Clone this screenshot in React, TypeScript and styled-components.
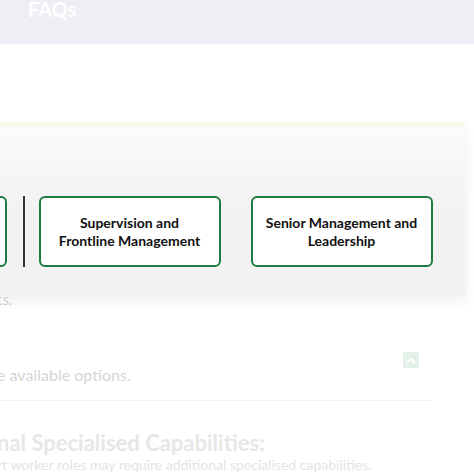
import styled, { createGlobalStyle } from "styled-components";

const GlobalStyle = createGlobalStyle`
  html, body {
    margin: 0;
    padding: 0;
    background: #ffffff;
    overflow: hidden;
  }
  body {
    font-family: Lato, "Liberation Sans", sans-serif;
  }
`;

const Page = styled.div`
  width: 474px;
  height: 474px;
  overflow: hidden;
  position: relative;
`;

const Banner = styled.header`
  height: 45px;
  background: #efeef4;
  padding-left: 28px;
  box-sizing: border-box;
  box-shadow: 0 1px 2px rgba(0, 0, 0, 0.02);
`;

const BannerTitle = styled.h1`
  margin: 0;
  font-size: 20px;
  line-height: 20px;
  font-weight: 700;
  color: #ffffff;
  margin-top: -1px;
`;

const Spacer = styled.div<{ $h: number }>`
  height: ${(p) => p.$h}px;
`;

const Panel = styled.section`
  width: 465px;
  border-top: 5px solid #f8f8ec;
  background: linear-gradient(#fbfbfb 0px, #f3f3f3 75px, #f2f2f2 100%);
  box-shadow: 2px 6px 10px rgba(0, 0, 0, 0.05);
  padding: 69px 0 30px;
  box-sizing: border-box;
  height: 174px;
`;

const TrackRow = styled.div`
  display: flex;
  align-items: center;
  margin-left: -20px;
`;

const Track = styled.button<{ $w: number }>`
  width: ${(p) => p.$w}px;
  height: 71px;
  flex: none;
  background: #ffffff;
  border: 2.5px solid #1b7d3f;
  border-radius: 6px;
  font-family: Lato, "Liberation Sans", sans-serif;
  font-weight: 700;
  font-size: 14px;
  line-height: 18px;
  color: #111111;
  text-align: center;
  padding: 0 6px;
  box-sizing: border-box;
`;

const Divider = styled.div`
  width: 1.5px;
  height: 71px;
  background: #333333;
  margin: 0 14px 0 16px;
  flex: none;
`;

const Gap = styled.div`
  width: 30px;
  flex: none;
`;

const Faded = styled.p<{ $size: number; $color: string; $bold?: boolean }>`
  margin: 0;
  font-size: ${(p) => p.$size}px;
  color: ${(p) => p.$color};
  font-weight: ${(p) => (p.$bold ? 700 : 400)};
  white-space: nowrap;
  margin-left: -3px;
`;

const OptionRow = styled.div`
  position: relative;
  width: 432px;
  height: 93px;
  border-bottom: 1px solid #f2f2f2;
  display: flex;
  align-items: flex-end;
  padding-bottom: 16px;
  box-sizing: border-box;
`;

const UpButton = styled.span`
  position: absolute;
  left: 403px;
  top: 44px;
  width: 16px;
  height: 16px;
  background: #e4f1e8;
  display: flex;
  align-items: center;
  justify-content: center;
`;

const Section = styled.div`
  padding-top: 28px;
`;

export default function App() {
  return (
    <Page>
      <GlobalStyle />
      <Banner>
        <BannerTitle>FAQs</BannerTitle>
      </Banner>
      <Spacer $h={78} />
      <Panel>
        <TrackRow>
          <Track $w={27} />
          <Divider />
          <Track $w={182}>
            Supervision and
            <br />
            Frontline Management
          </Track>
          <Gap />
          <Track $w={182}>
            Senior Management and
            <br />
            Leadership
          </Track>
        </TrackRow>
      </Panel>
      <Faded $size={15} $color="#cbcbcb" style={{ marginTop: -6 }}>
        ts.
      </Faded>
      <OptionRow>
        <UpButton>
          <svg width="10" height="7" viewBox="0 0 10 7">
            <path d="M1 6 L5 2 L9 6" fill="none" stroke="#ffffff" strokeWidth="2" />
          </svg>
        </UpButton>
        <Faded $size={16} $color="#d5d5d5">
          e available options.
        </Faded>
      </OptionRow>
      <Section>
        <Faded $size={22} $color="#e7e7e7" $bold>
          nal Specialised Capabilities:
        </Faded>
        <Faded $size={14} $color="#e4e4e4">
          rt worker roles may require additional specialised capabilities.
        </Faded>
      </Section>
    </Page>
  );
}
